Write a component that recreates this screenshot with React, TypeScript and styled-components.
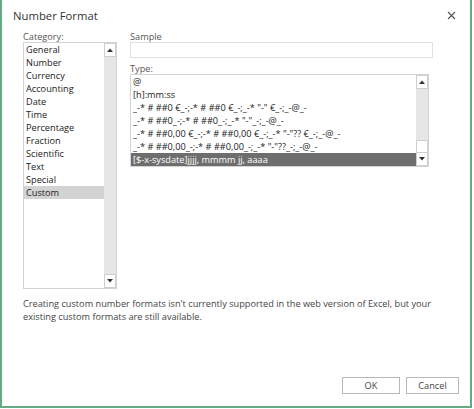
import styled, { createGlobalStyle } from "styled-components";

const GlobalStyle = createGlobalStyle`
  html, body {
    margin: 0;
    padding: 0;
    background: #ffffff;
    overflow: hidden;
  }
  * {
    box-sizing: border-box;
  }
`;

const Dialog = styled.div`
  width: 472px;
  height: 408px;
  border-left: 2px solid #66a985;
  border-right: 2px solid #66a985;
  border-bottom: 2px solid #66a985;
  background: #ffffff;
  display: flex;
  flex-direction: column;
  font-family: "Open Sans", "Noto Sans", sans-serif;
  color: #262626;
`;

const TitleBar = styled.div`
  height: 31px;
  display: flex;
  align-items: flex-start;
  justify-content: space-between;
  padding: 7px 14px 0 11px;
`;

const Title = styled.div`
  font-family: "Open Sans", "Noto Sans", sans-serif;
  font-size: 11.3px;
  line-height: 17px;
  color: #333333;
`;

const CloseButton = styled.div`
  width: 10px;
  height: 10px;
  margin-top: 3px;
  display: flex;
  align-items: center;
  justify-content: center;
`;

const Body = styled.div`
  display: flex;
  gap: 13px;
  padding-left: 21px;
`;

const Column = styled.div<{ $width: number }>`
  width: ${(p) => p.$width}px;
  display: flex;
  flex-direction: column;
`;

const Label = styled.div<{ $top?: number }>`
  font-size: 9.2px;
  line-height: 11px;
  color: #555555;
  margin-top: ${(p) => p.$top ?? 0}px;
`;

const ListBox = styled.div<{ $height: number; $width: number }>`
  width: ${(p) => p.$width}px;
  height: ${(p) => p.$height}px;
  border: 1px solid #d4d4d4;
  display: flex;
  background: #ffffff;
`;

const Items = styled.div`
  flex: 1;
  min-width: 0;
  overflow: hidden;
  display: flex;
  flex-direction: column;
`;

const Item = styled.div<{ $selected?: boolean; $dark?: boolean }>`
  height: 13px;
  line-height: 13px;
  font-size: 9.2px;
  padding-left: 2px;
  white-space: nowrap;
  color: ${(p) => (p.$dark && p.$selected ? "#ffffff" : "#222222")};
  background: ${(p) =>
    p.$selected ? (p.$dark ? "#6e6e6e" : "#d3d3d3") : "transparent"};
`;

const ScrollBar = styled.div`
  width: 12px;
  display: flex;
  flex-direction: column;
  background: #e6e6e6;
`;

const ArrowButton = styled.div`
  height: 14px;
  background: #ffffff;
  border: 1px solid #cfcfcf;
  display: flex;
  align-items: center;
  justify-content: center;
`;

const Track = styled.div`
  flex: 1;
  display: flex;
  flex-direction: column;
  justify-content: flex-end;
`;

const Thumb = styled.div`
  height: 12px;
  background: #ffffff;
  border: 1px solid #cfcfcf;
  border-bottom: none;
`;

const SampleBox = styled.div`
  width: 303px;
  height: 16px;
  border: 1px solid #e1e1e1;
`;

const Note = styled.div`
  margin-top: 9px;
  padding-left: 21px;
  font-size: 9.2px;
  line-height: 12.5px;
  color: #444444;
`;

const Footer = styled.div`
  margin-top: auto;
  display: flex;
  justify-content: flex-end;
  gap: 6px;
  padding: 0 11px 12px 0;
`;

const Button = styled.button<{ $width: number }>`
  width: ${(p) => p.$width}px;
  height: 17px;
  background: #ffffff;
  border: 1px solid #b8b8b8;
  font-family: "Open Sans", "Noto Sans", sans-serif;
  font-size: 9.2px;
  color: #444444;
  padding: 0;
`;

function Arrow({ up }: { up?: boolean }) {
  return (
    <svg width="6" height="4" viewBox="0 0 6 4">
      <path d={up ? "M0 4 L3 0.5 L6 4 Z" : "M0 0 L3 3.5 L6 0 Z"} fill="#333333" />
    </svg>
  );
}

const categories = [
  "General",
  "Number",
  "Currency",
  "Accounting",
  "Date",
  "Time",
  "Percentage",
  "Fraction",
  "Scientific",
  "Text",
  "Special",
  "Custom",
];

const types = [
  "@",
  "[h]:mm:ss",
  '_-* # ##0 €_-;-* # ##0 €_-;_-* "-" €_-;_-@_-',
  '_-* # ##0_-;-* # ##0_-;_-* "-"_-;_-@_-',
  '_-* # ##0,00 €_-;-* # ##0,00 €_-;_-* "-"?? €_-;_-@_-',
  '_-* # ##0,00_-;-* # ##0,00_-;_-* "-"??_-;_-@_-',
  "[$-x-sysdate]jjjj, mmmm jj, aaaa",
];

export default function App() {
  return (
    <>
      <GlobalStyle />
      <Dialog>
        <TitleBar>
          <Title>Number Format</Title>
          <CloseButton>
            <svg width="9" height="9" viewBox="0 0 9 9">
              <path d="M1 1 L8 8 M8 1 L1 8" stroke="#555555" strokeWidth="1.1" />
            </svg>
          </CloseButton>
        </TitleBar>
        <Body>
          <Column $width={94}>
            <Label>Category:</Label>
            <ListBox $width={94} $height={247}>
              <Items>
                {categories.map((c) => (
                  <Item key={c} $selected={c === "Custom"}>
                    {c}
                  </Item>
                ))}
              </Items>
              <ScrollBar>
                <ArrowButton>
                  <Arrow up />
                </ArrowButton>
                <Track />
                <ArrowButton>
                  <Arrow />
                </ArrowButton>
              </ScrollBar>
            </ListBox>
          </Column>
          <Column $width={303}>
            <Label>Sample</Label>
            <SampleBox />
            <Label $top={5}>Type:</Label>
            <ListBox $width={299} $height={93}>
              <Items>
                {types.map((t, i) => (
                  <Item key={t} $dark $selected={i === types.length - 1}>
                    {t}
                  </Item>
                ))}
              </Items>
              <ScrollBar>
                <ArrowButton>
                  <Arrow up />
                </ArrowButton>
                <Track>
                  <Thumb />
                </Track>
                <ArrowButton>
                  <Arrow />
                </ArrowButton>
              </ScrollBar>
            </ListBox>
          </Column>
        </Body>
        <Note>
          Creating custom number formats isn't currently supported in the web version of Excel, but your
          <br />
          existing custom formats are still available.
        </Note>
        <Footer>
          <Button $width={58}>OK</Button>
          <Button $width={53}>Cancel</Button>
        </Footer>
      </Dialog>
    </>
  );
}
